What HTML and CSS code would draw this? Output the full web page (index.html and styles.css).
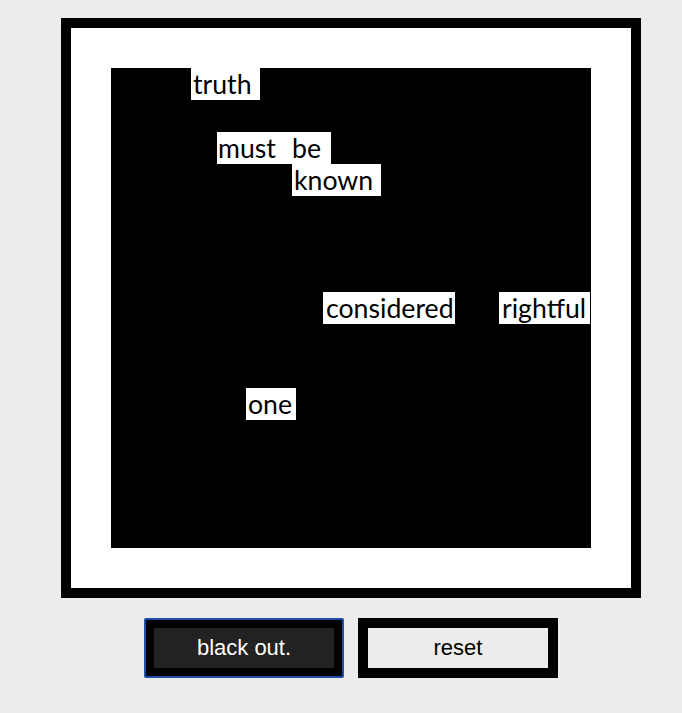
FILE: index.html
```html
<!DOCTYPE html>
<html lang="en">
<head>
<meta charset="utf-8">
<title>black out.</title>
<link rel="stylesheet" href="styles.css">
</head>
<body>
<main class="page">
  <section class="frame">
    <div class="canvas">
      <div class="line"><span class="w at-truth">truth</span></div>
      <div class="line"></div>
      <div class="line"><span class="w at-must">must</span> <span class="w at-be">be</span></div>
      <div class="line"><span class="w at-known">known</span></div>
      <div class="line"></div>
      <div class="line"></div>
      <div class="line"></div>
      <div class="line"><span class="w at-considered">considered</span> <span class="w at-rightful">rightful</span></div>
      <div class="line"></div>
      <div class="line"></div>
      <div class="line"><span class="w at-one">one</span></div>
    </div>
  </section>
  <div class="controls">
    <button class="btn btn-dark" type="button">black out.</button>
    <button class="btn btn-light" type="button">reset</button>
  </div>
</main>
</body>
</html>
```

FILE: styles.css
```css
html, body {
  margin: 0;
  padding: 0;
  background: #ececec;
}

.page {
  width: 580px;
  padding: 18px 0 0 61px;
}

.frame {
  border: 10px solid #000;
  background: #fff;
  padding: 40px;
}

.canvas {
  width: 480px;
  height: 480px;
  background: #000;
  display: flex;
  flex-direction: column;
  font-family: Lato, "Open Sans", sans-serif;
  font-size: 26.67px;
  color: #000;
}

.line {
  height: 32px;
  display: flex;
  align-items: flex-start;
}

.w {
  display: inline-block;
  box-sizing: border-box;
  background: #fff;
  line-height: 32px;
  height: 32px;
  padding-left: 2px;
  white-space: nowrap;
  flex: none;
}

.at-truth { margin-left: 80px; width: 69px; }
.at-must { margin-left: 106px; width: 73px; padding-left: 1px; }
.at-be { width: 41px; padding-left: 2px; }
.at-known { margin-left: 181px; width: 89px; }
.at-considered { margin-left: 212px; width: 132px; padding-left: 3px; }
.at-rightful { margin-left: auto; margin-right: 1px; width: 91px; padding-left: 3px; }
.at-one { margin-left: 135px; width: 50px; }

.controls {
  display: flex;
  justify-content: center;
  gap: 14px;
  margin-top: 20px;
}

.btn {
  width: 200px;
  height: 60px;
  border: 10px solid #000;
  font-family: "Liberation Sans", Arial, sans-serif;
  font-size: 22px;
  padding: 0;
  margin: 0;
}

.btn-dark {
  background: #222;
  color: #fff;
  outline: 2px solid #1f4fa6;
  outline-offset: -2px;
  border-radius: 3px;
}

.btn-light {
  background: #ececec;
  color: #000;
}
```
